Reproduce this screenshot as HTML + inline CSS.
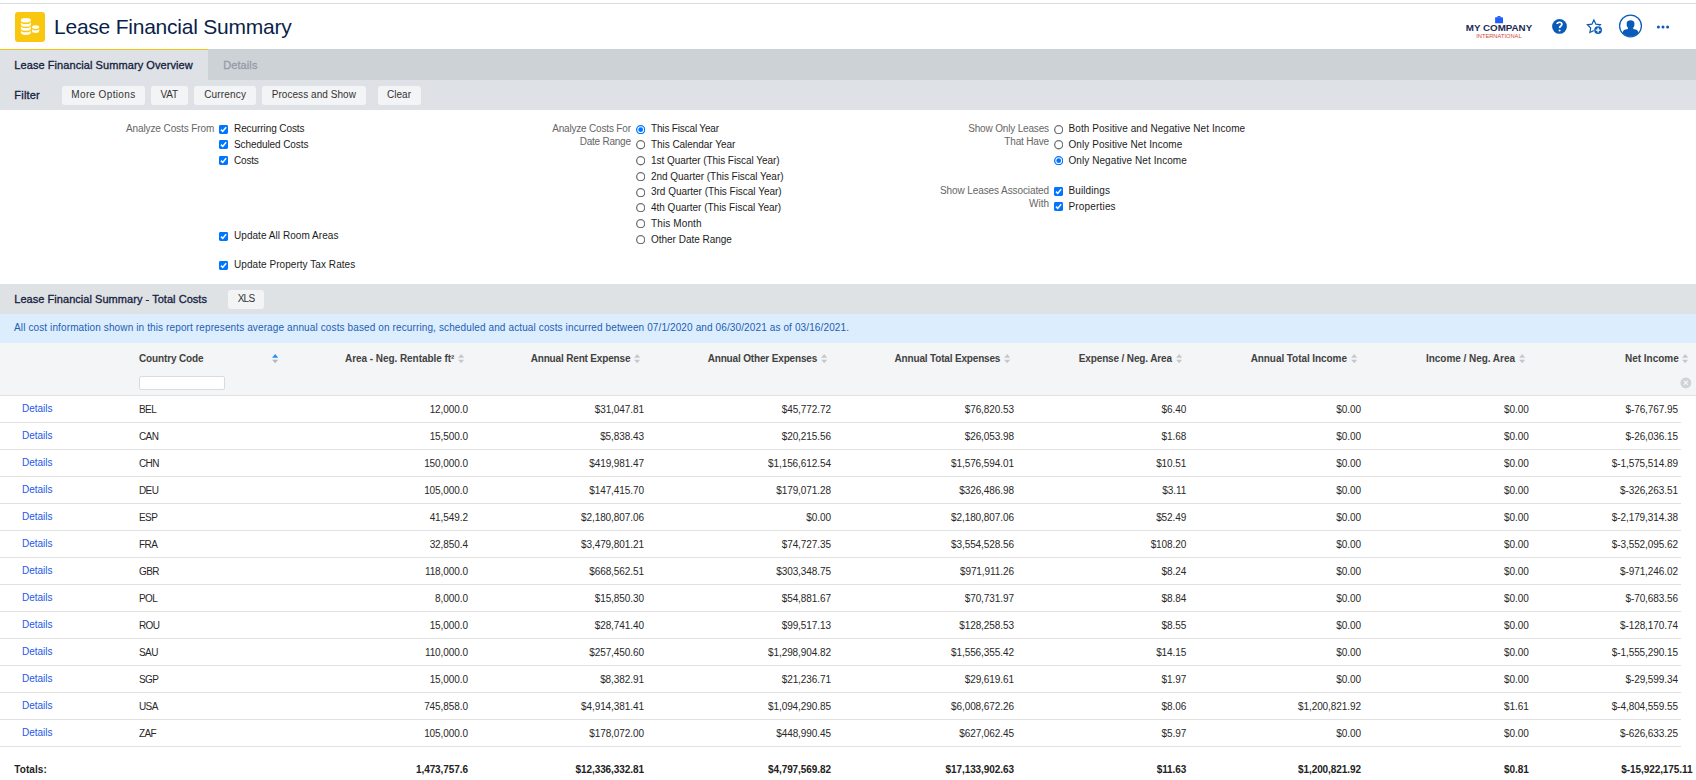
<!DOCTYPE html>
<html lang="en">
<head>
<meta charset="utf-8">
<title>Lease Financial Summary</title>
<style>
*{box-sizing:border-box;margin:0;padding:0}
html,body{width:1696px;height:780px;overflow:hidden;background:#fff}
body{font-family:"Liberation Sans",sans-serif;font-size:10px;color:#222;position:relative}
.abs{position:absolute;white-space:nowrap}
#topline{left:0;top:3px;width:1696px;height:1px;background:#d9dbe3}
#appicon{left:15px;top:12px;width:30px;height:30px;border-radius:3px;background:#f9c80e}
.title{font-size:21px;line-height:28px;color:#0b1f4a}
#tabbar{left:0;top:49px;width:1696px;height:31px;background:#cdd2d7}
#tab1{left:0;top:49px;width:208px;height:31px;background:#dee2e6;border-top:1px solid #f5c211}
.tab{font-size:11px;line-height:16px;color:#14213d;-webkit-text-stroke:0.3px #14213d}
.tab.dim{color:#969ca5;-webkit-text-stroke:0.3px #969ca5}
#filterbar{left:0;top:80px;width:1696px;height:30px;background:#dee2e6}
.btn{top:86px;height:19px;background:#f3f4f6;border-radius:3px;font-size:10px;line-height:18px;color:#333;text-align:center}
.bt{font-size:10px;line-height:14px;color:#333}
.lbl{color:#666;font-size:10px;line-height:14px}
.opt{color:#1c1c1c;font-size:10px;line-height:14px}
#ptitle{left:0;top:284px;width:1696px;height:30px;background:#dfe2e5}
#info{left:0;top:314px;width:1696px;height:29px;background:#dcedfd}
.info{font-size:10px;line-height:14px;color:#1c5db6}
#thead{left:0;top:343px;width:1696px;height:53px;background:#f4f5f6;border-bottom:1px solid #e2e2e2}
.th{font-size:10px;line-height:14px;color:#424242;font-weight:bold}
.row{left:0;width:1681px;height:27px;border-top:1px solid #e2e2e2}
.c{font-size:10px;line-height:14px;color:#282828}
.lnk{color:#2457e6}
.tot{font-size:10px;line-height:14px;color:#222;font-weight:bold}
</style>
</head>
<body>
<div class="abs" id="topline"></div>
<div class="abs" id="appicon"></div>
<svg class="abs" style="left:15px;top:12px" width="30" height="30" viewBox="0 0 30 30">
<g fill="#fffdf3">
<ellipse cx="10.9" cy="8.3" rx="5" ry="2.3"/>
<path d="M5.9 9.7 A5 2.3 0 0 0 15.9 9.7 V12.4 A5 2.3 0 0 1 5.9 12.4 Z"/>
<path d="M5.9 13.8 A5 2.3 0 0 0 15.9 13.8 V16.5 A5 2.3 0 0 1 5.9 16.5 Z"/>
<path d="M5.9 17.9 A5 2.3 0 0 0 15.9 17.9 V20.6 A5 2.3 0 0 1 5.9 20.6 Z"/>
<ellipse cx="20.6" cy="15.1" rx="3.6" ry="1.9"/>
<path d="M17 16.4 A3.6 1.9 0 0 0 24.2 16.4 V19 A3.6 1.9 0 0 1 17 19 Z"/>
</g>
</svg>
<svg class="abs" style="left:1460px;top:12px" width="80" height="30" viewBox="0 0 80 30">
<rect x="35.1" y="5.2" width="7.9" height="6.1" rx="0.6" fill="#1f5eff"/>
<rect x="37.4" y="4" width="3.2" height="1.6" rx="0.5" fill="#1f5eff"/>
<text x="5.8" y="19.2" font-family="Liberation Sans, sans-serif" font-weight="bold" font-size="9.9" fill="#1b2c55" textLength="66.4" lengthAdjust="spacingAndGlyphs">MY COMPANY</text>
<text x="16.2" y="25.8" font-family="Liberation Sans, sans-serif" font-size="5.2" fill="#cf4a3a" textLength="45.4" lengthAdjust="spacingAndGlyphs">INTERNATIONAL</text>
</svg>
<svg class="abs" style="left:1550px;top:12px" width="130" height="30" viewBox="0 0 130 30">
<circle cx="9.5" cy="14.4" r="7.4" fill="#0a5bb8"/>
<path d="M7.1 12.1 C7.1 9.6 11.9 9.6 11.9 12.2 C11.9 14 9.6 14 9.6 16.1" fill="none" stroke="#fff" stroke-width="1.7"/>
<circle cx="9.6" cy="18.6" r="1" fill="#fff"/>
<path d="M43.9 8 L45.9 12.2 L50.4 12.8 L47.1 16 L47.9 20.5 L43.9 18.4 L39.9 20.5 L40.7 16 L37.4 12.8 L41.9 12.2 Z" fill="none" stroke="#0a5bb8" stroke-width="1.2" stroke-linejoin="miter"/>
<circle cx="48.1" cy="18.1" r="4.5" fill="#fff"/>
<circle cx="48.1" cy="18.1" r="3.9" fill="#0a5bb8"/>
<path d="M48.1 15.7 V20.5 M45.7 18.1 H50.5" stroke="#fff" stroke-width="1.4"/>
<defs><clipPath id="uc"><circle cx="80.5" cy="13.9" r="10.6"/></clipPath></defs>
<circle cx="80.5" cy="13.9" r="10.9" fill="#fff" stroke="#0a5bb8" stroke-width="1.25"/>
<g clip-path="url(#uc)" fill="#0a5bb8">
<path d="M76.7 11 C76.7 7.3 84.4 7.3 84.4 11 V13 C84.4 14.5 83.6 15.2 83.2 15.8 V17 L85.5 17.6 C88.3 18.4 89 20.5 89 26 H72 C72 20.5 72.7 18.4 75.5 17.6 L77.9 17 V15.8 C77.5 15.2 76.7 14.5 76.7 13 Z"/>
</g>
<circle cx="108.4" cy="15" r="1.5" fill="#0a5bb8"/><circle cx="113" cy="15" r="1.5" fill="#0a5bb8"/><circle cx="117.6" cy="15" r="1.5" fill="#0a5bb8"/>
</svg>

<div class="abs" id="tabbar"></div>
<div class="abs" id="tab1"></div>
<div class="abs" id="filterbar"></div>
<div class="abs btn" style="left:62px;width:83px"></div>
<div class="abs btn" style="left:151px;width:37px"></div>
<div class="abs btn" style="left:194px;width:62px"></div>
<div class="abs btn" style="left:262px;width:104px"></div>
<div class="abs btn" style="left:378px;width:43px"></div>
<svg class="abs" style="left:219px;top:125px" width="9" height="9" viewBox="0 0 13 13"><rect width="13" height="13" rx="2" fill="#0075ff"/><path d="M2.9 6.7 L5.4 9.3 L10.3 3.4" fill="none" stroke="#fff" stroke-width="2.2"/></svg>
<svg class="abs" style="left:219px;top:140px" width="9" height="9" viewBox="0 0 13 13"><rect width="13" height="13" rx="2" fill="#0075ff"/><path d="M2.9 6.7 L5.4 9.3 L10.3 3.4" fill="none" stroke="#fff" stroke-width="2.2"/></svg>
<svg class="abs" style="left:219px;top:156px" width="9" height="9" viewBox="0 0 13 13"><rect width="13" height="13" rx="2" fill="#0075ff"/><path d="M2.9 6.7 L5.4 9.3 L10.3 3.4" fill="none" stroke="#fff" stroke-width="2.2"/></svg>
<svg class="abs" style="left:219px;top:232px" width="9" height="9" viewBox="0 0 13 13"><rect width="13" height="13" rx="2" fill="#0075ff"/><path d="M2.9 6.7 L5.4 9.3 L10.3 3.4" fill="none" stroke="#fff" stroke-width="2.2"/></svg>
<svg class="abs" style="left:219px;top:261px" width="9" height="9" viewBox="0 0 13 13"><rect width="13" height="13" rx="2" fill="#0075ff"/><path d="M2.9 6.7 L5.4 9.3 L10.3 3.4" fill="none" stroke="#fff" stroke-width="2.2"/></svg>
<svg class="abs" style="left:636px;top:125px" width="9.4" height="9.4" viewBox="0 0 13 13"><circle cx="6.5" cy="6.5" r="5.6" fill="#fff" stroke="#0075ff" stroke-width="1.8"/><circle cx="6.5" cy="6.5" r="3.3" fill="#0075ff"/></svg>
<svg class="abs" style="left:636px;top:140.4px" width="9.4" height="9.4" viewBox="0 0 13 13"><circle cx="6.5" cy="6.5" r="5.6" fill="#fff" stroke="#707070" stroke-width="1.8"/></svg>
<svg class="abs" style="left:636px;top:156.2px" width="9.4" height="9.4" viewBox="0 0 13 13"><circle cx="6.5" cy="6.5" r="5.6" fill="#fff" stroke="#707070" stroke-width="1.8"/></svg>
<svg class="abs" style="left:636px;top:172px" width="9.4" height="9.4" viewBox="0 0 13 13"><circle cx="6.5" cy="6.5" r="5.6" fill="#fff" stroke="#707070" stroke-width="1.8"/></svg>
<svg class="abs" style="left:636px;top:187.7px" width="9.4" height="9.4" viewBox="0 0 13 13"><circle cx="6.5" cy="6.5" r="5.6" fill="#fff" stroke="#707070" stroke-width="1.8"/></svg>
<svg class="abs" style="left:636px;top:203.1px" width="9.4" height="9.4" viewBox="0 0 13 13"><circle cx="6.5" cy="6.5" r="5.6" fill="#fff" stroke="#707070" stroke-width="1.8"/></svg>
<svg class="abs" style="left:636px;top:218.7px" width="9.4" height="9.4" viewBox="0 0 13 13"><circle cx="6.5" cy="6.5" r="5.6" fill="#fff" stroke="#707070" stroke-width="1.8"/></svg>
<svg class="abs" style="left:636px;top:235px" width="9.4" height="9.4" viewBox="0 0 13 13"><circle cx="6.5" cy="6.5" r="5.6" fill="#fff" stroke="#707070" stroke-width="1.8"/></svg>
<svg class="abs" style="left:1054px;top:125px" width="9.4" height="9.4" viewBox="0 0 13 13"><circle cx="6.5" cy="6.5" r="5.6" fill="#fff" stroke="#707070" stroke-width="1.8"/></svg>
<svg class="abs" style="left:1054px;top:140.4px" width="9.4" height="9.4" viewBox="0 0 13 13"><circle cx="6.5" cy="6.5" r="5.6" fill="#fff" stroke="#707070" stroke-width="1.8"/></svg>
<svg class="abs" style="left:1054px;top:156.1px" width="9.4" height="9.4" viewBox="0 0 13 13"><circle cx="6.5" cy="6.5" r="5.6" fill="#fff" stroke="#0075ff" stroke-width="1.8"/><circle cx="6.5" cy="6.5" r="3.3" fill="#0075ff"/></svg>
<svg class="abs" style="left:1054px;top:187.1px" width="9" height="9" viewBox="0 0 13 13"><rect width="13" height="13" rx="2" fill="#0075ff"/><path d="M2.9 6.7 L5.4 9.3 L10.3 3.4" fill="none" stroke="#fff" stroke-width="2.2"/></svg>
<svg class="abs" style="left:1054px;top:202.1px" width="9" height="9" viewBox="0 0 13 13"><rect width="13" height="13" rx="2" fill="#0075ff"/><path d="M2.9 6.7 L5.4 9.3 L10.3 3.4" fill="none" stroke="#fff" stroke-width="2.2"/></svg>
<div class="abs" id="ptitle"></div>
<div class="abs btn" style="left:228px;top:290px;width:36px"></div>
<div class="abs" id="info"></div>
<div class="abs" id="thead"></div>
<div class="abs row" style="top:395px"></div>
<div class="abs row" style="top:422px"></div>
<div class="abs row" style="top:449px"></div>
<div class="abs row" style="top:476px"></div>
<div class="abs row" style="top:503px"></div>
<div class="abs row" style="top:530px"></div>
<div class="abs row" style="top:557px"></div>
<div class="abs row" style="top:584px"></div>
<div class="abs row" style="top:611px"></div>
<div class="abs row" style="top:638px"></div>
<div class="abs row" style="top:665px"></div>
<div class="abs row" style="top:692px"></div>
<div class="abs row" style="top:719px"></div>
<div class="abs row" style="top:746px;height:1px"></div>
<svg class="abs" style="left:271.8px;top:354.3px" width="6.4" height="9.4" viewBox="0 0 6.4 9.4"><path d="M3.2 0 L6.3 3.8 H0.1 Z" fill="#1e8fff"/><path d="M3.2 9.3 L6.3 5.8 H0.1 Z" fill="#b3b8bd"/></svg>
<svg class="abs" style="left:457.8px;top:354.3px" width="6.4" height="9.4" viewBox="0 0 6.4 9.4"><path d="M3.2 0 L6.3 3.8 H0.1 Z" fill="#c4c8cd"/><path d="M3.2 9.3 L6.3 5.8 H0.1 Z" fill="#c4c8cd"/></svg>
<svg class="abs" style="left:634px;top:354.3px" width="6.4" height="9.4" viewBox="0 0 6.4 9.4"><path d="M3.2 0 L6.3 3.8 H0.1 Z" fill="#c4c8cd"/><path d="M3.2 9.3 L6.3 5.8 H0.1 Z" fill="#c4c8cd"/></svg>
<svg class="abs" style="left:820.8px;top:354.3px" width="6.4" height="9.4" viewBox="0 0 6.4 9.4"><path d="M3.2 0 L6.3 3.8 H0.1 Z" fill="#c4c8cd"/><path d="M3.2 9.3 L6.3 5.8 H0.1 Z" fill="#c4c8cd"/></svg>
<svg class="abs" style="left:1003.8px;top:354.3px" width="6.4" height="9.4" viewBox="0 0 6.4 9.4"><path d="M3.2 0 L6.3 3.8 H0.1 Z" fill="#c4c8cd"/><path d="M3.2 9.3 L6.3 5.8 H0.1 Z" fill="#c4c8cd"/></svg>
<svg class="abs" style="left:1175.7px;top:354.3px" width="6.4" height="9.4" viewBox="0 0 6.4 9.4"><path d="M3.2 0 L6.3 3.8 H0.1 Z" fill="#c4c8cd"/><path d="M3.2 9.3 L6.3 5.8 H0.1 Z" fill="#c4c8cd"/></svg>
<svg class="abs" style="left:1350.8px;top:354.3px" width="6.4" height="9.4" viewBox="0 0 6.4 9.4"><path d="M3.2 0 L6.3 3.8 H0.1 Z" fill="#c4c8cd"/><path d="M3.2 9.3 L6.3 5.8 H0.1 Z" fill="#c4c8cd"/></svg>
<svg class="abs" style="left:1518.5px;top:354.3px" width="6.4" height="9.4" viewBox="0 0 6.4 9.4"><path d="M3.2 0 L6.3 3.8 H0.1 Z" fill="#c4c8cd"/><path d="M3.2 9.3 L6.3 5.8 H0.1 Z" fill="#c4c8cd"/></svg>
<svg class="abs" style="left:1681.8px;top:354.3px" width="6.4" height="9.4" viewBox="0 0 6.4 9.4"><path d="M3.2 0 L6.3 3.8 H0.1 Z" fill="#c4c8cd"/><path d="M3.2 9.3 L6.3 5.8 H0.1 Z" fill="#c4c8cd"/></svg>
<div class="abs" style="left:139px;top:376px;width:86px;height:14px;background:#fff;border:1px solid #d9dbde;border-radius:2px"></div>
<svg class="abs" style="left:1680.2px;top:377.2px" width="11.7" height="11.7" viewBox="0 0 12 12"><circle cx="6" cy="6" r="5.6" fill="#cfd2d6"/><path d="M3.9 3.9 L8.1 8.1 M8.1 3.9 L3.9 8.1" stroke="#f4f5f6" stroke-width="1.3"/></svg>
<span id="t0" class="abs title" style="top:13px;left:54px;letter-spacing:-0.230px;">Lease Financial Summary</span>
<span id="t1" class="abs tab" style="top:57px;left:14.3px;letter-spacing:0.076px;">Lease Financial Summary Overview</span>
<span id="t2" class="abs tab dim" style="top:57px;left:223.2px;letter-spacing:0.096px;">Details</span>
<span id="t3" class="abs tab" style="top:87px;left:14.3px;letter-spacing:0.208px;">Filter</span>
<span id="t4" class="abs bt" style="top:88px;left:71.3px;letter-spacing:0.347px;">More Options</span>
<span id="t5" class="abs bt" style="top:88px;left:160.4px;letter-spacing:-0.090px;">VAT</span>
<span id="t6" class="abs bt" style="top:88px;left:204.2px;letter-spacing:0.165px;">Currency</span>
<span id="t7" class="abs bt" style="top:88px;left:271.7px;letter-spacing:0.057px;">Process and Show</span>
<span id="t8" class="abs bt" style="top:88px;left:387px;letter-spacing:0.019px;">Clear</span>
<span id="t9" class="abs bt" style="top:292px;left:237.7px;letter-spacing:-0.735px;">XLS</span>
<span id="t10" class="abs lbl" style="top:122px;right:1481.7px;letter-spacing:-0.096px;margin-right:0.096px;">Analyze Costs From</span>
<span id="t11" class="abs lbl" style="top:122px;right:1065px;letter-spacing:-0.177px;margin-right:0.177px;">Analyze Costs For</span>
<span id="t12" class="abs lbl" style="top:135px;right:1065px;letter-spacing:-0.227px;margin-right:0.227px;">Date Range</span>
<span id="t13" class="abs lbl" style="top:122px;right:646.9px;letter-spacing:-0.162px;margin-right:0.162px;">Show Only Leases</span>
<span id="t14" class="abs lbl" style="top:135px;right:646.9px;letter-spacing:-0.171px;margin-right:0.171px;">That Have</span>
<span id="t15" class="abs lbl" style="top:183.5px;right:646.9px;letter-spacing:-0.099px;margin-right:0.099px;">Show Leases Associated</span>
<span id="t16" class="abs lbl" style="top:196.5px;right:646.9px;letter-spacing:0.050px;margin-right:-0.050px;">With</span>
<span id="t17" class="abs opt" style="top:122px;left:234px;letter-spacing:-0.080px;">Recurring Costs</span>
<span id="t18" class="abs opt" style="top:138px;left:234px;letter-spacing:-0.087px;">Scheduled Costs</span>
<span id="t19" class="abs opt" style="top:154px;left:234px;letter-spacing:-0.192px;">Costs</span>
<span id="t20" class="abs opt" style="top:229px;left:234px;letter-spacing:0.053px;">Update All Room Areas</span>
<span id="t21" class="abs opt" style="top:258px;left:234px;letter-spacing:0.056px;">Update Property Tax Rates</span>
<span id="t22" class="abs opt" style="top:122px;left:651px;letter-spacing:-0.168px;">This Fiscal Year</span>
<span id="t23" class="abs opt" style="top:138px;left:651px;letter-spacing:-0.048px;">This Calendar Year</span>
<span id="t24" class="abs opt" style="top:154px;left:651px;letter-spacing:-0.052px;">1st Quarter (This Fiscal Year)</span>
<span id="t25" class="abs opt" style="top:170px;left:651px;letter-spacing:-0.030px;">2nd Quarter (This Fiscal Year)</span>
<span id="t26" class="abs opt" style="top:185px;left:651px;letter-spacing:-0.019px;">3rd Quarter (This Fiscal Year)</span>
<span id="t27" class="abs opt" style="top:201px;left:651px;letter-spacing:-0.014px;">4th Quarter (This Fiscal Year)</span>
<span id="t28" class="abs opt" style="top:217px;left:651px;letter-spacing:0.123px;">This Month</span>
<span id="t29" class="abs opt" style="top:233px;left:651px;letter-spacing:-0.017px;">Other Date Range</span>
<span id="t30" class="abs opt" style="top:122px;left:1068.5px;letter-spacing:0.073px;">Both Positive and Negative Net Income</span>
<span id="t31" class="abs opt" style="top:138px;left:1068.5px;letter-spacing:0.068px;">Only Positive Net Income</span>
<span id="t32" class="abs opt" style="top:154px;left:1068.5px;letter-spacing:0.070px;">Only Negative Net Income</span>
<span id="t33" class="abs opt" style="top:184px;left:1068.5px;letter-spacing:0.101px;">Buildings</span>
<span id="t34" class="abs opt" style="top:200px;left:1068.5px;letter-spacing:0.172px;">Properties</span>
<span id="t35" class="abs tab" style="top:291px;left:14.3px;letter-spacing:0.042px;">Lease Financial Summary - Total Costs</span>
<span id="t36" class="abs info" style="top:321px;left:14px;letter-spacing:0.121px;">All cost information shown in this report represents average annual costs based on recurring, scheduled and actual costs incurred between 07/1/2020 and 06/30/2021 as of 03/16/2021.</span>
<span id="t37" class="abs th" style="top:352px;left:139px;letter-spacing:-0.142px;">Country Code</span>
<span id="t38" class="abs th" style="top:352px;right:1241.6px;letter-spacing:-0.049px;margin-right:0.049px;">Area - Neg. Rentable ft²</span>
<span id="t39" class="abs th" style="top:352px;right:1065.5px;letter-spacing:-0.164px;margin-right:0.164px;">Annual Rent Expense</span>
<span id="t40" class="abs th" style="top:352px;right:878.7px;letter-spacing:-0.158px;margin-right:0.158px;">Annual Other Expenses</span>
<span id="t41" class="abs th" style="top:352px;right:695.6px;letter-spacing:-0.171px;margin-right:0.171px;">Annual Total Expenses</span>
<span id="t42" class="abs th" style="top:352px;right:524px;letter-spacing:-0.146px;margin-right:0.146px;">Expense / Neg. Area</span>
<span id="t43" class="abs th" style="top:352px;right:349px;letter-spacing:-0.069px;margin-right:0.069px;">Annual Total Income</span>
<span id="t44" class="abs th" style="top:352px;right:181px;letter-spacing:-0.037px;margin-right:0.037px;">Income / Neg. Area</span>
<span id="t45" class="abs th" style="top:352px;right:17.3px;letter-spacing:-0.021px;margin-right:0.021px;">Net Income</span>
<span id="t46" class="abs c lnk" style="top:402px;left:22px;letter-spacing:-0.011px;">Details</span>
<span id="t47" class="abs c" style="top:403px;left:139px;letter-spacing:-0.6px;">BEL</span>
<span id="t48" class="abs c" style="top:403px;right:1228px;letter-spacing:-0.08px;margin-right:0.08px;">12,000.0</span>
<span id="t49" class="abs c" style="top:403px;right:1052px;letter-spacing:-0.08px;margin-right:0.08px;">$31,047.81</span>
<span id="t50" class="abs c" style="top:403px;right:865px;letter-spacing:-0.08px;margin-right:0.08px;">$45,772.72</span>
<span id="t51" class="abs c" style="top:403px;right:682px;letter-spacing:-0.08px;margin-right:0.08px;">$76,820.53</span>
<span id="t52" class="abs c" style="top:403px;right:509.7px;letter-spacing:-0.08px;margin-right:0.08px;">$6.40</span>
<span id="t53" class="abs c" style="top:403px;right:335px;letter-spacing:-0.08px;margin-right:0.08px;">$0.00</span>
<span id="t54" class="abs c" style="top:403px;right:167.2px;letter-spacing:-0.08px;margin-right:0.08px;">$0.00</span>
<span id="t55" class="abs c" style="top:403px;right:18px;letter-spacing:-0.08px;margin-right:0.08px;">$-76,767.95</span>
<span id="t56" class="abs c lnk" style="top:429px;left:22px;letter-spacing:-0.011px;">Details</span>
<span id="t57" class="abs c" style="top:430px;left:139px;letter-spacing:-0.6px;">CAN</span>
<span id="t58" class="abs c" style="top:430px;right:1228px;letter-spacing:-0.08px;margin-right:0.08px;">15,500.0</span>
<span id="t59" class="abs c" style="top:430px;right:1052px;letter-spacing:-0.08px;margin-right:0.08px;">$5,838.43</span>
<span id="t60" class="abs c" style="top:430px;right:865px;letter-spacing:-0.08px;margin-right:0.08px;">$20,215.56</span>
<span id="t61" class="abs c" style="top:430px;right:682px;letter-spacing:-0.08px;margin-right:0.08px;">$26,053.98</span>
<span id="t62" class="abs c" style="top:430px;right:509.7px;letter-spacing:-0.08px;margin-right:0.08px;">$1.68</span>
<span id="t63" class="abs c" style="top:430px;right:335px;letter-spacing:-0.08px;margin-right:0.08px;">$0.00</span>
<span id="t64" class="abs c" style="top:430px;right:167.2px;letter-spacing:-0.08px;margin-right:0.08px;">$0.00</span>
<span id="t65" class="abs c" style="top:430px;right:18px;letter-spacing:-0.08px;margin-right:0.08px;">$-26,036.15</span>
<span id="t66" class="abs c lnk" style="top:456px;left:22px;letter-spacing:-0.011px;">Details</span>
<span id="t67" class="abs c" style="top:457px;left:139px;letter-spacing:-0.6px;">CHN</span>
<span id="t68" class="abs c" style="top:457px;right:1228px;letter-spacing:-0.08px;margin-right:0.08px;">150,000.0</span>
<span id="t69" class="abs c" style="top:457px;right:1052px;letter-spacing:-0.08px;margin-right:0.08px;">$419,981.47</span>
<span id="t70" class="abs c" style="top:457px;right:865px;letter-spacing:-0.08px;margin-right:0.08px;">$1,156,612.54</span>
<span id="t71" class="abs c" style="top:457px;right:682px;letter-spacing:-0.08px;margin-right:0.08px;">$1,576,594.01</span>
<span id="t72" class="abs c" style="top:457px;right:509.7px;letter-spacing:-0.08px;margin-right:0.08px;">$10.51</span>
<span id="t73" class="abs c" style="top:457px;right:335px;letter-spacing:-0.08px;margin-right:0.08px;">$0.00</span>
<span id="t74" class="abs c" style="top:457px;right:167.2px;letter-spacing:-0.08px;margin-right:0.08px;">$0.00</span>
<span id="t75" class="abs c" style="top:457px;right:18px;letter-spacing:-0.08px;margin-right:0.08px;">$-1,575,514.89</span>
<span id="t76" class="abs c lnk" style="top:483px;left:22px;letter-spacing:-0.011px;">Details</span>
<span id="t77" class="abs c" style="top:484px;left:139px;letter-spacing:-0.6px;">DEU</span>
<span id="t78" class="abs c" style="top:484px;right:1228px;letter-spacing:-0.08px;margin-right:0.08px;">105,000.0</span>
<span id="t79" class="abs c" style="top:484px;right:1052px;letter-spacing:-0.08px;margin-right:0.08px;">$147,415.70</span>
<span id="t80" class="abs c" style="top:484px;right:865px;letter-spacing:-0.08px;margin-right:0.08px;">$179,071.28</span>
<span id="t81" class="abs c" style="top:484px;right:682px;letter-spacing:-0.08px;margin-right:0.08px;">$326,486.98</span>
<span id="t82" class="abs c" style="top:484px;right:509.7px;letter-spacing:-0.08px;margin-right:0.08px;">$3.11</span>
<span id="t83" class="abs c" style="top:484px;right:335px;letter-spacing:-0.08px;margin-right:0.08px;">$0.00</span>
<span id="t84" class="abs c" style="top:484px;right:167.2px;letter-spacing:-0.08px;margin-right:0.08px;">$0.00</span>
<span id="t85" class="abs c" style="top:484px;right:18px;letter-spacing:-0.08px;margin-right:0.08px;">$-326,263.51</span>
<span id="t86" class="abs c lnk" style="top:510px;left:22px;letter-spacing:-0.011px;">Details</span>
<span id="t87" class="abs c" style="top:511px;left:139px;letter-spacing:-0.6px;">ESP</span>
<span id="t88" class="abs c" style="top:511px;right:1228px;letter-spacing:-0.08px;margin-right:0.08px;">41,549.2</span>
<span id="t89" class="abs c" style="top:511px;right:1052px;letter-spacing:-0.08px;margin-right:0.08px;">$2,180,807.06</span>
<span id="t90" class="abs c" style="top:511px;right:865px;letter-spacing:-0.08px;margin-right:0.08px;">$0.00</span>
<span id="t91" class="abs c" style="top:511px;right:682px;letter-spacing:-0.08px;margin-right:0.08px;">$2,180,807.06</span>
<span id="t92" class="abs c" style="top:511px;right:509.7px;letter-spacing:-0.08px;margin-right:0.08px;">$52.49</span>
<span id="t93" class="abs c" style="top:511px;right:335px;letter-spacing:-0.08px;margin-right:0.08px;">$0.00</span>
<span id="t94" class="abs c" style="top:511px;right:167.2px;letter-spacing:-0.08px;margin-right:0.08px;">$0.00</span>
<span id="t95" class="abs c" style="top:511px;right:18px;letter-spacing:-0.08px;margin-right:0.08px;">$-2,179,314.38</span>
<span id="t96" class="abs c lnk" style="top:537px;left:22px;letter-spacing:-0.011px;">Details</span>
<span id="t97" class="abs c" style="top:538px;left:139px;letter-spacing:-0.6px;">FRA</span>
<span id="t98" class="abs c" style="top:538px;right:1228px;letter-spacing:-0.08px;margin-right:0.08px;">32,850.4</span>
<span id="t99" class="abs c" style="top:538px;right:1052px;letter-spacing:-0.08px;margin-right:0.08px;">$3,479,801.21</span>
<span id="t100" class="abs c" style="top:538px;right:865px;letter-spacing:-0.08px;margin-right:0.08px;">$74,727.35</span>
<span id="t101" class="abs c" style="top:538px;right:682px;letter-spacing:-0.08px;margin-right:0.08px;">$3,554,528.56</span>
<span id="t102" class="abs c" style="top:538px;right:509.7px;letter-spacing:-0.08px;margin-right:0.08px;">$108.20</span>
<span id="t103" class="abs c" style="top:538px;right:335px;letter-spacing:-0.08px;margin-right:0.08px;">$0.00</span>
<span id="t104" class="abs c" style="top:538px;right:167.2px;letter-spacing:-0.08px;margin-right:0.08px;">$0.00</span>
<span id="t105" class="abs c" style="top:538px;right:18px;letter-spacing:-0.08px;margin-right:0.08px;">$-3,552,095.62</span>
<span id="t106" class="abs c lnk" style="top:564px;left:22px;letter-spacing:-0.011px;">Details</span>
<span id="t107" class="abs c" style="top:565px;left:139px;letter-spacing:-0.6px;">GBR</span>
<span id="t108" class="abs c" style="top:565px;right:1228px;letter-spacing:-0.08px;margin-right:0.08px;">118,000.0</span>
<span id="t109" class="abs c" style="top:565px;right:1052px;letter-spacing:-0.08px;margin-right:0.08px;">$668,562.51</span>
<span id="t110" class="abs c" style="top:565px;right:865px;letter-spacing:-0.08px;margin-right:0.08px;">$303,348.75</span>
<span id="t111" class="abs c" style="top:565px;right:682px;letter-spacing:-0.08px;margin-right:0.08px;">$971,911.26</span>
<span id="t112" class="abs c" style="top:565px;right:509.7px;letter-spacing:-0.08px;margin-right:0.08px;">$8.24</span>
<span id="t113" class="abs c" style="top:565px;right:335px;letter-spacing:-0.08px;margin-right:0.08px;">$0.00</span>
<span id="t114" class="abs c" style="top:565px;right:167.2px;letter-spacing:-0.08px;margin-right:0.08px;">$0.00</span>
<span id="t115" class="abs c" style="top:565px;right:18px;letter-spacing:-0.08px;margin-right:0.08px;">$-971,246.02</span>
<span id="t116" class="abs c lnk" style="top:591px;left:22px;letter-spacing:-0.011px;">Details</span>
<span id="t117" class="abs c" style="top:592px;left:139px;letter-spacing:-0.6px;">POL</span>
<span id="t118" class="abs c" style="top:592px;right:1228px;letter-spacing:-0.08px;margin-right:0.08px;">8,000.0</span>
<span id="t119" class="abs c" style="top:592px;right:1052px;letter-spacing:-0.08px;margin-right:0.08px;">$15,850.30</span>
<span id="t120" class="abs c" style="top:592px;right:865px;letter-spacing:-0.08px;margin-right:0.08px;">$54,881.67</span>
<span id="t121" class="abs c" style="top:592px;right:682px;letter-spacing:-0.08px;margin-right:0.08px;">$70,731.97</span>
<span id="t122" class="abs c" style="top:592px;right:509.7px;letter-spacing:-0.08px;margin-right:0.08px;">$8.84</span>
<span id="t123" class="abs c" style="top:592px;right:335px;letter-spacing:-0.08px;margin-right:0.08px;">$0.00</span>
<span id="t124" class="abs c" style="top:592px;right:167.2px;letter-spacing:-0.08px;margin-right:0.08px;">$0.00</span>
<span id="t125" class="abs c" style="top:592px;right:18px;letter-spacing:-0.08px;margin-right:0.08px;">$-70,683.56</span>
<span id="t126" class="abs c lnk" style="top:618px;left:22px;letter-spacing:-0.011px;">Details</span>
<span id="t127" class="abs c" style="top:619px;left:139px;letter-spacing:-0.6px;">ROU</span>
<span id="t128" class="abs c" style="top:619px;right:1228px;letter-spacing:-0.08px;margin-right:0.08px;">15,000.0</span>
<span id="t129" class="abs c" style="top:619px;right:1052px;letter-spacing:-0.08px;margin-right:0.08px;">$28,741.40</span>
<span id="t130" class="abs c" style="top:619px;right:865px;letter-spacing:-0.08px;margin-right:0.08px;">$99,517.13</span>
<span id="t131" class="abs c" style="top:619px;right:682px;letter-spacing:-0.08px;margin-right:0.08px;">$128,258.53</span>
<span id="t132" class="abs c" style="top:619px;right:509.7px;letter-spacing:-0.08px;margin-right:0.08px;">$8.55</span>
<span id="t133" class="abs c" style="top:619px;right:335px;letter-spacing:-0.08px;margin-right:0.08px;">$0.00</span>
<span id="t134" class="abs c" style="top:619px;right:167.2px;letter-spacing:-0.08px;margin-right:0.08px;">$0.00</span>
<span id="t135" class="abs c" style="top:619px;right:18px;letter-spacing:-0.08px;margin-right:0.08px;">$-128,170.74</span>
<span id="t136" class="abs c lnk" style="top:645px;left:22px;letter-spacing:-0.011px;">Details</span>
<span id="t137" class="abs c" style="top:646px;left:139px;letter-spacing:-0.6px;">SAU</span>
<span id="t138" class="abs c" style="top:646px;right:1228px;letter-spacing:-0.08px;margin-right:0.08px;">110,000.0</span>
<span id="t139" class="abs c" style="top:646px;right:1052px;letter-spacing:-0.08px;margin-right:0.08px;">$257,450.60</span>
<span id="t140" class="abs c" style="top:646px;right:865px;letter-spacing:-0.08px;margin-right:0.08px;">$1,298,904.82</span>
<span id="t141" class="abs c" style="top:646px;right:682px;letter-spacing:-0.08px;margin-right:0.08px;">$1,556,355.42</span>
<span id="t142" class="abs c" style="top:646px;right:509.7px;letter-spacing:-0.08px;margin-right:0.08px;">$14.15</span>
<span id="t143" class="abs c" style="top:646px;right:335px;letter-spacing:-0.08px;margin-right:0.08px;">$0.00</span>
<span id="t144" class="abs c" style="top:646px;right:167.2px;letter-spacing:-0.08px;margin-right:0.08px;">$0.00</span>
<span id="t145" class="abs c" style="top:646px;right:18px;letter-spacing:-0.08px;margin-right:0.08px;">$-1,555,290.15</span>
<span id="t146" class="abs c lnk" style="top:672px;left:22px;letter-spacing:-0.011px;">Details</span>
<span id="t147" class="abs c" style="top:673px;left:139px;letter-spacing:-0.6px;">SGP</span>
<span id="t148" class="abs c" style="top:673px;right:1228px;letter-spacing:-0.08px;margin-right:0.08px;">15,000.0</span>
<span id="t149" class="abs c" style="top:673px;right:1052px;letter-spacing:-0.08px;margin-right:0.08px;">$8,382.91</span>
<span id="t150" class="abs c" style="top:673px;right:865px;letter-spacing:-0.08px;margin-right:0.08px;">$21,236.71</span>
<span id="t151" class="abs c" style="top:673px;right:682px;letter-spacing:-0.08px;margin-right:0.08px;">$29,619.61</span>
<span id="t152" class="abs c" style="top:673px;right:509.7px;letter-spacing:-0.08px;margin-right:0.08px;">$1.97</span>
<span id="t153" class="abs c" style="top:673px;right:335px;letter-spacing:-0.08px;margin-right:0.08px;">$0.00</span>
<span id="t154" class="abs c" style="top:673px;right:167.2px;letter-spacing:-0.08px;margin-right:0.08px;">$0.00</span>
<span id="t155" class="abs c" style="top:673px;right:18px;letter-spacing:-0.08px;margin-right:0.08px;">$-29,599.34</span>
<span id="t156" class="abs c lnk" style="top:699px;left:22px;letter-spacing:-0.011px;">Details</span>
<span id="t157" class="abs c" style="top:700px;left:139px;letter-spacing:-0.6px;">USA</span>
<span id="t158" class="abs c" style="top:700px;right:1228px;letter-spacing:-0.08px;margin-right:0.08px;">745,858.0</span>
<span id="t159" class="abs c" style="top:700px;right:1052px;letter-spacing:-0.08px;margin-right:0.08px;">$4,914,381.41</span>
<span id="t160" class="abs c" style="top:700px;right:865px;letter-spacing:-0.08px;margin-right:0.08px;">$1,094,290.85</span>
<span id="t161" class="abs c" style="top:700px;right:682px;letter-spacing:-0.08px;margin-right:0.08px;">$6,008,672.26</span>
<span id="t162" class="abs c" style="top:700px;right:509.7px;letter-spacing:-0.08px;margin-right:0.08px;">$8.06</span>
<span id="t163" class="abs c" style="top:700px;right:335px;letter-spacing:-0.08px;margin-right:0.08px;">$1,200,821.92</span>
<span id="t164" class="abs c" style="top:700px;right:167.2px;letter-spacing:-0.08px;margin-right:0.08px;">$1.61</span>
<span id="t165" class="abs c" style="top:700px;right:18px;letter-spacing:-0.08px;margin-right:0.08px;">$-4,804,559.55</span>
<span id="t166" class="abs c lnk" style="top:726px;left:22px;letter-spacing:-0.011px;">Details</span>
<span id="t167" class="abs c" style="top:727px;left:139px;letter-spacing:-0.6px;">ZAF</span>
<span id="t168" class="abs c" style="top:727px;right:1228px;letter-spacing:-0.08px;margin-right:0.08px;">105,000.0</span>
<span id="t169" class="abs c" style="top:727px;right:1052px;letter-spacing:-0.08px;margin-right:0.08px;">$178,072.00</span>
<span id="t170" class="abs c" style="top:727px;right:865px;letter-spacing:-0.08px;margin-right:0.08px;">$448,990.45</span>
<span id="t171" class="abs c" style="top:727px;right:682px;letter-spacing:-0.08px;margin-right:0.08px;">$627,062.45</span>
<span id="t172" class="abs c" style="top:727px;right:509.7px;letter-spacing:-0.08px;margin-right:0.08px;">$5.97</span>
<span id="t173" class="abs c" style="top:727px;right:335px;letter-spacing:-0.08px;margin-right:0.08px;">$0.00</span>
<span id="t174" class="abs c" style="top:727px;right:167.2px;letter-spacing:-0.08px;margin-right:0.08px;">$0.00</span>
<span id="t175" class="abs c" style="top:727px;right:18px;letter-spacing:-0.08px;margin-right:0.08px;">$-626,633.25</span>
<span id="t176" class="abs tot" style="top:763px;left:14.3px;letter-spacing:0.065px;">Totals:</span>
<span id="t177" class="abs tot" style="top:763px;right:1228px;letter-spacing:-0.08px;margin-right:0.08px;">1,473,757.6</span>
<span id="t178" class="abs tot" style="top:763px;right:1052px;letter-spacing:-0.08px;margin-right:0.08px;">$12,336,332.81</span>
<span id="t179" class="abs tot" style="top:763px;right:865px;letter-spacing:-0.08px;margin-right:0.08px;">$4,797,569.82</span>
<span id="t180" class="abs tot" style="top:763px;right:682px;letter-spacing:-0.08px;margin-right:0.08px;">$17,133,902.63</span>
<span id="t181" class="abs tot" style="top:763px;right:509.7px;letter-spacing:-0.08px;margin-right:0.08px;">$11.63</span>
<span id="t182" class="abs tot" style="top:763px;right:335px;letter-spacing:-0.08px;margin-right:0.08px;">$1,200,821.92</span>
<span id="t183" class="abs tot" style="top:763px;right:167.2px;letter-spacing:-0.08px;margin-right:0.08px;">$0.81</span>
<span id="t184" class="abs tot" style="top:763px;right:3.5px;letter-spacing:-0.08px;margin-right:0.08px;">$-15,922,175.11</span>
</body>
</html>
